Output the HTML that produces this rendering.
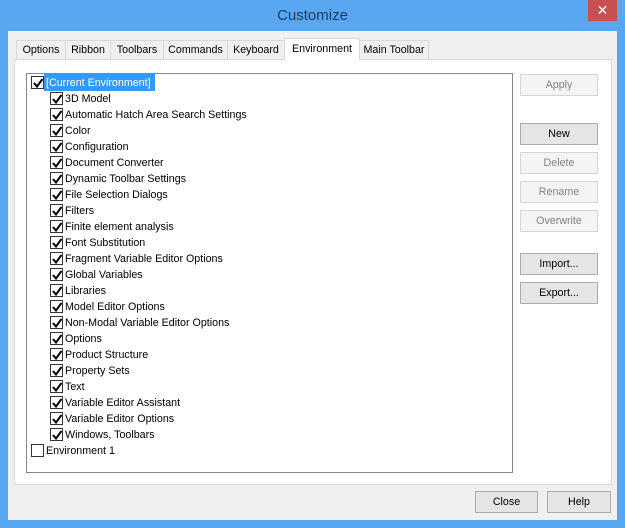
<!DOCTYPE html>
<html><head><style>
*{margin:0;padding:0;box-sizing:border-box}
body{width:625px;height:528px;background:#58a7f0;font-family:"Liberation Sans",sans-serif;font-size:10.7px;color:#000;position:relative;overflow:hidden}
.a{position:absolute}
.title{left:0;top:7px;width:625px;text-align:center;font-size:15px;color:#1e3b5a}
.x{left:588px;top:0;width:29px;height:21px;background:#c75050;color:#fff;text-align:center;font-size:14px;line-height:20px}
.client{left:8px;top:31px;width:609px;height:489px;background:#f0f0f0}
.tab{top:40px;height:19px;border:1px solid #d9d9d9;border-bottom:none;background:#f0f0f0;text-align:center;line-height:19px}
.tab.sel{top:38px;height:22px;background:#fff;border-color:#d9d9d9;z-index:2;line-height:20px}
.panel{left:14px;top:59px;width:598px;height:426px;background:#fff;border:1px solid #d9d9d9}
.list{left:26px;top:73px;width:487px;height:400px;background:#fff;border:1px solid #828790}
.btn{width:78px;height:22px;border:1px solid #acacac;background:#e5e5e5;text-align:center;line-height:21px}
.dis{color:#838383;border-color:#d5d5d5;background:#f4f4f4}
.cb{width:13px;height:13px;border:1px solid #333;background:#fff}
.cb svg{position:absolute;left:0;top:0}
.lbl{line-height:17px;white-space:nowrap;margin-top:1px}
</style></head><body>
<div class="a title">Customize</div>
<div class="a x">✕</div>
<div class="a client"></div>
<div class="a tab" style="left:16px;width:50px">Options</div>
<div class="a tab" style="left:65px;width:46px">Ribbon</div>
<div class="a tab" style="left:110px;width:54px">Toolbars</div>
<div class="a tab" style="left:163px;width:65px">Commands</div>
<div class="a tab" style="left:227px;width:58px">Keyboard</div>
<div class="a tab sel" style="left:284px;width:76px">Environment</div>
<div class="a tab" style="left:359px;width:70px">Main Toolbar</div>
<div class="a panel"></div>
<div class="a list"></div>
<div class="a" style="left:44px;top:74px;width:111px;height:17px;background:#3399ff"></div>
<div class="a btn dis" style="left:520px;top:74px">Apply</div>
<div class="a btn" style="left:520px;top:123px">New</div>
<div class="a btn dis" style="left:520px;top:152px">Delete</div>
<div class="a btn dis" style="left:520px;top:181px">Rename</div>
<div class="a btn dis" style="left:520px;top:210px">Overwrite</div>
<div class="a btn" style="left:520px;top:253px">Import...</div>
<div class="a btn" style="left:520px;top:282px">Export...</div>
<div class="a btn" style="left:475px;top:491px;width:63px">Close</div>
<div class="a btn" style="left:547px;top:491px;width:64px">Help</div>
<div class="a cb" style="left:31px;top:76px"><svg width="13" height="13"><path d="M2 6 L5 9.5 L10.5 2" stroke="#000" stroke-width="2" fill="none"/></svg></div>
<div class="a lbl" style="left:46px;top:74px;color:#fff">[Current Environment]</div>
<div class="a cb" style="left:31px;top:444px"></div>
<div class="a lbl" style="left:46px;top:442px">Environment 1</div>
<div class="a" style="left:50px;top:90px;width:300px">
<div class="a cb" style="left:0;top:2px"><svg width="13" height="13"><path d="M2 6 L5 9.5 L10.5 2" stroke="#000" stroke-width="2" fill="none"/></svg></div><div class="a lbl" style="left:15px;top:0">3D Model</div>
<div class="a cb" style="left:0;top:18px"><svg width="13" height="13"><path d="M2 6 L5 9.5 L10.5 2" stroke="#000" stroke-width="2" fill="none"/></svg></div><div class="a lbl" style="left:15px;top:16px">Automatic Hatch Area Search Settings</div>
<div class="a cb" style="left:0;top:34px"><svg width="13" height="13"><path d="M2 6 L5 9.5 L10.5 2" stroke="#000" stroke-width="2" fill="none"/></svg></div><div class="a lbl" style="left:15px;top:32px">Color</div>
<div class="a cb" style="left:0;top:50px"><svg width="13" height="13"><path d="M2 6 L5 9.5 L10.5 2" stroke="#000" stroke-width="2" fill="none"/></svg></div><div class="a lbl" style="left:15px;top:48px">Configuration</div>
<div class="a cb" style="left:0;top:66px"><svg width="13" height="13"><path d="M2 6 L5 9.5 L10.5 2" stroke="#000" stroke-width="2" fill="none"/></svg></div><div class="a lbl" style="left:15px;top:64px">Document Converter</div>
<div class="a cb" style="left:0;top:82px"><svg width="13" height="13"><path d="M2 6 L5 9.5 L10.5 2" stroke="#000" stroke-width="2" fill="none"/></svg></div><div class="a lbl" style="left:15px;top:80px">Dynamic Toolbar Settings</div>
<div class="a cb" style="left:0;top:98px"><svg width="13" height="13"><path d="M2 6 L5 9.5 L10.5 2" stroke="#000" stroke-width="2" fill="none"/></svg></div><div class="a lbl" style="left:15px;top:96px">File Selection Dialogs</div>
<div class="a cb" style="left:0;top:114px"><svg width="13" height="13"><path d="M2 6 L5 9.5 L10.5 2" stroke="#000" stroke-width="2" fill="none"/></svg></div><div class="a lbl" style="left:15px;top:112px">Filters</div>
<div class="a cb" style="left:0;top:130px"><svg width="13" height="13"><path d="M2 6 L5 9.5 L10.5 2" stroke="#000" stroke-width="2" fill="none"/></svg></div><div class="a lbl" style="left:15px;top:128px">Finite element analysis</div>
<div class="a cb" style="left:0;top:146px"><svg width="13" height="13"><path d="M2 6 L5 9.5 L10.5 2" stroke="#000" stroke-width="2" fill="none"/></svg></div><div class="a lbl" style="left:15px;top:144px">Font Substitution</div>
<div class="a cb" style="left:0;top:162px"><svg width="13" height="13"><path d="M2 6 L5 9.5 L10.5 2" stroke="#000" stroke-width="2" fill="none"/></svg></div><div class="a lbl" style="left:15px;top:160px">Fragment Variable Editor Options</div>
<div class="a cb" style="left:0;top:178px"><svg width="13" height="13"><path d="M2 6 L5 9.5 L10.5 2" stroke="#000" stroke-width="2" fill="none"/></svg></div><div class="a lbl" style="left:15px;top:176px">Global Variables</div>
<div class="a cb" style="left:0;top:194px"><svg width="13" height="13"><path d="M2 6 L5 9.5 L10.5 2" stroke="#000" stroke-width="2" fill="none"/></svg></div><div class="a lbl" style="left:15px;top:192px">Libraries</div>
<div class="a cb" style="left:0;top:210px"><svg width="13" height="13"><path d="M2 6 L5 9.5 L10.5 2" stroke="#000" stroke-width="2" fill="none"/></svg></div><div class="a lbl" style="left:15px;top:208px">Model Editor Options</div>
<div class="a cb" style="left:0;top:226px"><svg width="13" height="13"><path d="M2 6 L5 9.5 L10.5 2" stroke="#000" stroke-width="2" fill="none"/></svg></div><div class="a lbl" style="left:15px;top:224px">Non-Modal Variable Editor Options</div>
<div class="a cb" style="left:0;top:242px"><svg width="13" height="13"><path d="M2 6 L5 9.5 L10.5 2" stroke="#000" stroke-width="2" fill="none"/></svg></div><div class="a lbl" style="left:15px;top:240px">Options</div>
<div class="a cb" style="left:0;top:258px"><svg width="13" height="13"><path d="M2 6 L5 9.5 L10.5 2" stroke="#000" stroke-width="2" fill="none"/></svg></div><div class="a lbl" style="left:15px;top:256px">Product Structure</div>
<div class="a cb" style="left:0;top:274px"><svg width="13" height="13"><path d="M2 6 L5 9.5 L10.5 2" stroke="#000" stroke-width="2" fill="none"/></svg></div><div class="a lbl" style="left:15px;top:272px">Property Sets</div>
<div class="a cb" style="left:0;top:290px"><svg width="13" height="13"><path d="M2 6 L5 9.5 L10.5 2" stroke="#000" stroke-width="2" fill="none"/></svg></div><div class="a lbl" style="left:15px;top:288px">Text</div>
<div class="a cb" style="left:0;top:306px"><svg width="13" height="13"><path d="M2 6 L5 9.5 L10.5 2" stroke="#000" stroke-width="2" fill="none"/></svg></div><div class="a lbl" style="left:15px;top:304px">Variable Editor Assistant</div>
<div class="a cb" style="left:0;top:322px"><svg width="13" height="13"><path d="M2 6 L5 9.5 L10.5 2" stroke="#000" stroke-width="2" fill="none"/></svg></div><div class="a lbl" style="left:15px;top:320px">Variable Editor Options</div>
<div class="a cb" style="left:0;top:338px"><svg width="13" height="13"><path d="M2 6 L5 9.5 L10.5 2" stroke="#000" stroke-width="2" fill="none"/></svg></div><div class="a lbl" style="left:15px;top:336px">Windows, Toolbars</div>
</div>
</body></html>
